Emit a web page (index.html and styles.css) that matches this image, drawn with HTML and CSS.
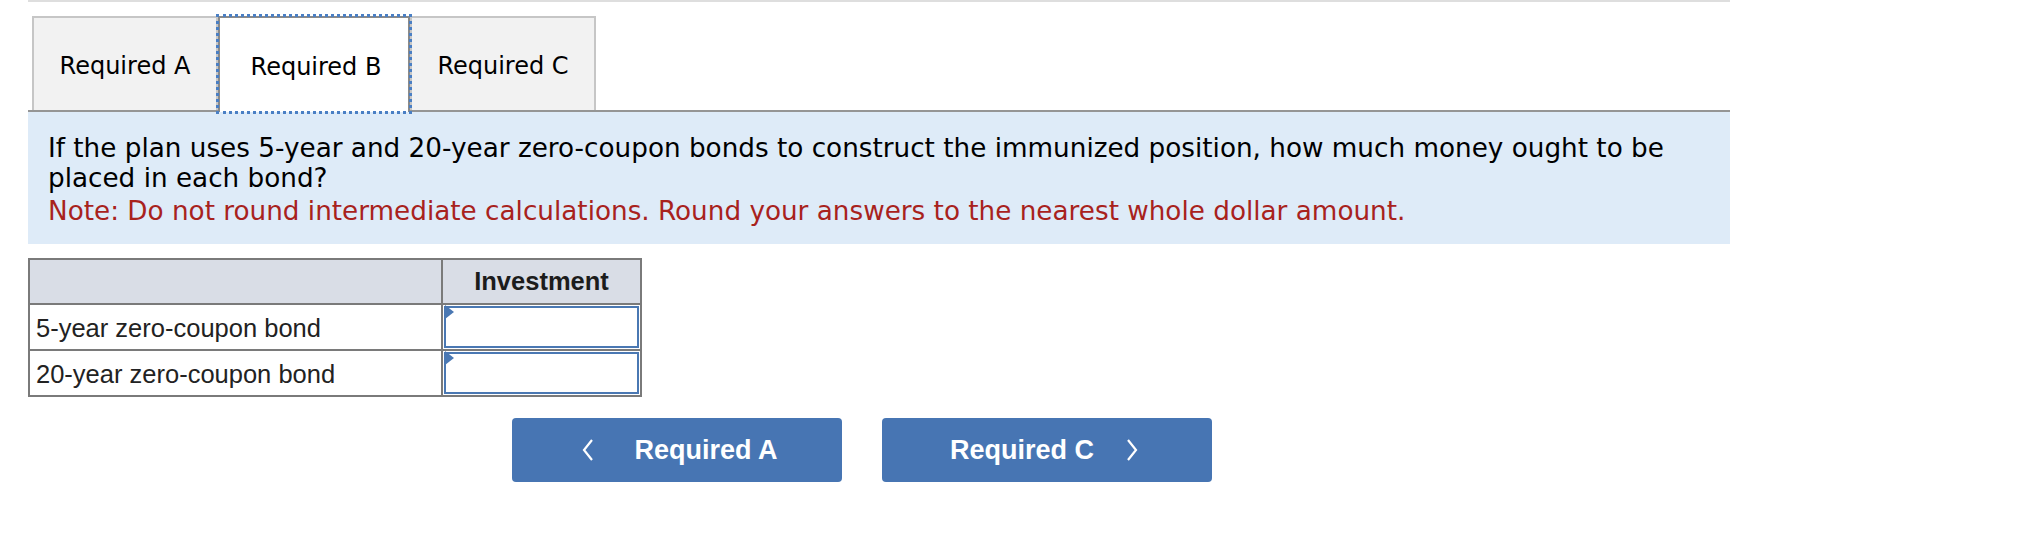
FILE: index.html
```html
<!DOCTYPE html>
<html>
<head>
<meta charset="utf-8">
<link rel="stylesheet" href="styles.css">
</head>
<body>
<div class="page">
  <div class="topline"></div>
  <div class="tabs">
    <div class="tab tab-a">Required A</div>
    <div class="tab tab-b active">Required B</div>
    <div class="tab tab-c">Required C</div>
  </div>
  <div class="question">
    <p class="q">If the plan uses 5-year and 20-year zero-coupon bonds to construct the immunized position, how much money ought to be placed in each bond?</p>
    <p class="note">Note: Do not round intermediate calculations. Round your answers to the nearest whole dollar amount.</p>
  </div>
  <table class="grid">
    <colgroup>
      <col class="c1">
      <col class="c2">
    </colgroup>
    <tr class="head">
      <th></th>
      <th>Investment</th>
    </tr>
    <tr class="row">
      <td class="label">5-year zero-coupon bond</td>
      <td class="inp"><div class="box"><span class="flag"></span></div></td>
    </tr>
    <tr class="row">
      <td class="label">20-year zero-coupon bond</td>
      <td class="inp"><div class="box"><span class="flag"></span></div></td>
    </tr>
  </table>
  <div class="nav">
    <button class="btn prev"><svg class="chev" width="12" height="22" viewBox="0 0 12 22"><path d="M10 1 L2 11 L10 21" fill="none" stroke="#fff" stroke-width="2.2"/></svg><span>Required A</span></button>
    <button class="btn next"><span>Required C</span><svg class="chev" width="12" height="22" viewBox="0 0 12 22"><path d="M2 1 L10 11 L2 21" fill="none" stroke="#fff" stroke-width="2.2"/></svg></button>
  </div>
</div>
</body>
</html>
```

FILE: styles.css
```css
html, body {
  margin: 0;
  padding: 0;
  background: #fff;
}
.page {
  margin-left: 28px;
  width: 1702px;
  font-family: "DejaVu Sans", Verdana, sans-serif;
}
.topline {
  height: 2px;
  background: #dedede;
}
.tabs {
  display: flex;
  margin-top: 14px;
  padding-left: 4px;
  border-bottom: 2px solid #959595;
  height: 94px;
}
.tab {
  box-sizing: border-box;
  height: 94px;
  display: flex;
  align-items: center;
  justify-content: center;
  font-size: 24px;
  color: #000;
  background: #f2f2f2;
  border: 2px solid #c6c6c6;
  border-bottom: none;
  padding-top: 4px;
}
.tab-a { width: 186px; }
.tab-b {
  width: 192px;
  background: #fff;
  border-color: #8a8a8a;
  outline: 3px dotted #4a7fc4;
  outline-offset: -1px;
  position: relative;
  z-index: 1;
  height: 96px;
  padding-left: 4px;
}
.tab-c { width: 186px; }
.question {
  background: #deebf8;
  padding: 21px 36px 18px 20px;
}
.question p {
  margin: 0;
  font-size: 26.25px;
  line-height: 30px;
}
.q { color: #000; }
.note {
  color: #a8221d;
  margin-top: 3px !important;
}
.grid {
  margin-top: 14px;
  border-collapse: collapse;
  table-layout: fixed;
  width: 612px;
  font-family: "Liberation Sans", Arial, sans-serif;
  font-size: 25.5px;
  color: #222;
}
.grid col.c1 { width: 413px; }
.grid col.c2 { width: 199px; }
.grid th, .grid td {
  border: 2px solid #7a7a7a;
  padding: 0;
}
.grid .head th {
  background: #d9dde6;
  height: 43px;
  font-weight: bold;
  text-align: center;
  color: #1c1c1c;
}
.grid td {
  height: 43px;
}
.grid td.label {
  padding-left: 6px;
  padding-top: 2px;
  height: 41px;
}
.grid td.inp {
  padding: 1px 0 0 1px;
  vertical-align: top;
}
.box {
  position: relative;
  box-sizing: border-box;
  height: 42px;
  width: 195px;
  border: 2px solid #4a78b3;
  background: #fff;
}
.flag {
  position: absolute;
  left: -1px;
  top: -3px;
  width: 0;
  height: 0;
  border-top: 7px solid transparent;
  border-bottom: 7px solid transparent;
  border-left: 9px solid #4a78b3;
}
.nav {
  display: flex;
  gap: 40px;
  margin-top: 21px;
  margin-left: 484px;
}
.btn {
  box-sizing: border-box;
  width: 330px;
  height: 64px;
  border: none;
  border-radius: 4px;
  background: #4775b3;
  color: #fff;
  font-family: "Liberation Sans", Arial, sans-serif;
  font-weight: bold;
  font-size: 27px;
  display: flex;
  align-items: center;
  justify-content: center;
  padding: 0;
}
.prev { gap: 40px; padding-left: 6px; }
.next { gap: 32px; padding-right: 6px; }
.chev { display: block; }
```
